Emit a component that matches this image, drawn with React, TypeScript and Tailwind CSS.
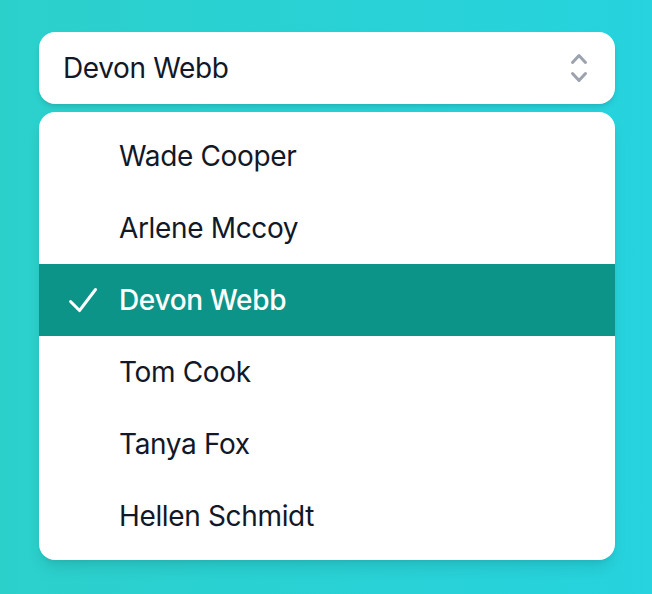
const people = ['Wade Cooper', 'Arlene Mccoy', 'Devon Webb', 'Tom Cook', 'Tanya Fox', 'Hellen Schmidt'];

function ChevronUpDown() {
  return (
    <svg viewBox="0 0 20 20" fill="currentColor" className="h-10 w-10 text-[#9ca3af]" aria-hidden="true">
      <path
        fillRule="evenodd"
        d="M10 3a.75.75 0 01.55.24l3.25 3.5a.75.75 0 11-1.1 1.02L10 4.852 7.3 7.76a.75.75 0 01-1.1-1.02l3.25-3.5A.75.75 0 0110 3zm-3.76 9.2a.75.75 0 011.06.04l2.7 2.908 2.7-2.908a.75.75 0 111.1 1.02l-3.25 3.5a.75.75 0 01-1.1 0l-3.25-3.5a.75.75 0 01.04-1.06z"
        clipRule="evenodd"
      />
    </svg>
  );
}

function Check() {
  return (
    <svg viewBox="0 0 20 20" fill="currentColor" className="h-10 w-10" aria-hidden="true">
      <path
        fillRule="evenodd"
        d="M16.704 4.153a.75.75 0 01.143 1.052l-8 10.5a.75.75 0 01-1.127.075l-4.5-4.5a.75.75 0 011.06-1.06l3.894 3.893 7.48-9.817a.75.75 0 011.05-.143z"
        clipRule="evenodd"
      />
    </svg>
  );
}

export default function App() {
  const selected = 'Devon Webb';
  return (
    <div
      className="h-[594px] w-[652px] bg-gradient-to-r from-[#2cd0cb] to-[#26d3de] pl-[39px] pt-[32px]"
      style={{ fontFamily: 'Inter, "Noto Sans", sans-serif' }}
    >
      <div className="w-[576px]">
        <button className="flex h-[72px] w-full items-center justify-between rounded-2xl bg-white pl-6 pr-4 text-left text-[28px] tracking-[-0.35px] text-[#111827] shadow-md">
          <span>{selected}</span>
          <ChevronUpDown />
        </button>
        <ul className="mt-2 rounded-2xl bg-white py-2 text-[28px] tracking-[-0.35px] shadow-lg">
          {people.map((p) => {
            const active = p === selected;
            return (
              <li
                key={p}
                className={
                  active
                    ? 'relative flex h-[72px] items-center bg-[#0d9488] pl-20 font-medium text-white'
                    : 'relative flex h-[72px] items-center pl-20 text-[#111827]'
                }
              >
                {active && (
                  <span className="absolute inset-y-0 left-0 flex items-center pl-6">
                    <Check />
                  </span>
                )}
                {p}
              </li>
            );
          })}
        </ul>
      </div>
    </div>
  );
}
